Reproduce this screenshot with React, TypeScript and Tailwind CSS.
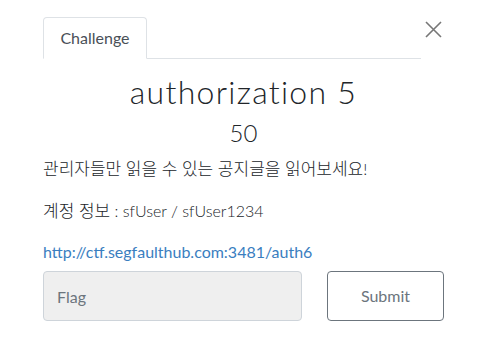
import React from 'react';

const lato = { fontFamily: 'Lato, "Noto Sans CJK KR", sans-serif' };

// Hangul runs are set a little larger so they sit like the original's Korean face
const Ko: React.FC<{ children: React.ReactNode }> = ({ children }) => (
  <span className="text-[17px]">{children}</span>
);

const App: React.FC = () => {
  return (
    <div className="min-h-screen w-full bg-white text-[#212529]" style={lato}>
      <div className="ml-[43px] w-[401px] pt-[17px]">
        <div className="flex items-start">
          <div className="flex w-[378px] border-b border-[#dee2e6]">
            <div className="-mb-px flex h-[42px] w-[104px] items-center justify-center rounded-t-[4px] border border-b-white border-[#dee2e6] bg-white text-[16px] text-[#495057]">
              Challenge
            </div>
          </div>
          <button type="button" className="ml-[4px] mt-[4px] flex h-[17px] w-[17px] items-center justify-center text-[#777]" title="Close">
            <svg width="17" height="17" viewBox="0 0 17 17" fill="none" stroke="currentColor" strokeWidth="1.6">
              <path d="M1 1 L16 16 M16 1 L1 16" />
            </svg>
          </button>
        </div>

        <h3 className="mt-[13px] text-center text-[32px] font-light leading-[40px] tracking-[0.04em] text-[#212529]">
          authorization 5
        </h3>
        <h4 className="mt-[6px] text-center text-[24px] font-light leading-[30px] text-[#212529]">50</h4>

        <p className="mt-[10px] text-[16px] font-light leading-[22px] text-[#212529]">
          <Ko>관리자들만 읽을 수 있는 공지글을 읽어보세요</Ko>!
        </p>
        <p className="mt-[20px] text-[16px] font-light leading-[22px] text-[#212529]">
          <Ko>계정 정보</Ko> : sfUser / sfUser1234
        </p>
        <p className="mt-[19px] text-[16px] leading-[22px]">
          <a className="text-[#3a7ebf]" href="#">http://ctf.segfaulthub.com:3481/auth6</a>
        </p>

        <div className="mt-[8px] flex items-center">
          <input
            className="h-[50px] w-[259px] rounded-[4px] border border-[#ced4da] bg-[#efefef] px-[13px] text-[16px] text-[#495057] placeholder-[#6c757d] outline-none"
            placeholder="Flag"
            style={lato}
          />
          <button
            type="button"
            className="ml-[25px] h-[50px] w-[117px] rounded-[4px] border border-[#6c757d] bg-white text-[16px] text-[#6c757d]"
          >
            Submit
          </button>
        </div>
      </div>
    </div>
  );
};

export default App;
